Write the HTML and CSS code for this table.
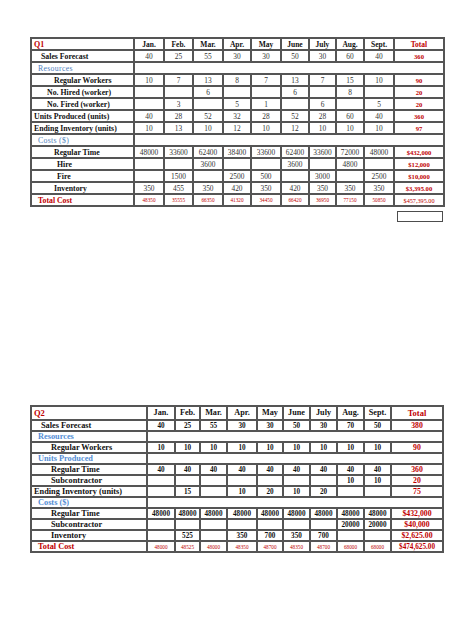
FILE: index.html
```html
<!DOCTYPE html>
<html>
<head>
<meta charset="utf-8">
<link rel="stylesheet" href="styles.css">
</head>
<body>
<div class="page">
  <table class="sheet sheet-q1">
    <colgroup>
      <col class="c-label1"><col style="width:30px"><col style="width:29px"><col style="width:30px"><col style="width:28px"><col style="width:30px"><col style="width:28px"><col style="width:27px"><col style="width:28px"><col style="width:30px"><col class="c-total1">
    </colgroup>
    <tr class="head">
      <td class="lbl q">Q1</td><td>Jan.</td><td>Feb.</td><td>Mar.</td><td>Apr.</td><td>May</td><td>June</td><td>July</td><td>Aug.</td><td>Sept.</td><td class="tot">Total</td>
    </tr>
    <tr><td class="lbl i1">Sales Forecast</td><td>40</td><td>25</td><td>55</td><td>30</td><td>30</td><td>50</td><td>30</td><td>60</td><td>40</td><td class="tot">360</td></tr>
    <tr><td class="lbl sec">Resources</td><td colspan="10"></td></tr>
    <tr><td class="lbl i3">Regular Workers</td><td>10</td><td>7</td><td>13</td><td>8</td><td>7</td><td>13</td><td>7</td><td>15</td><td>10</td><td class="tot">90</td></tr>
    <tr><td class="lbl i2">No. Hired (worker)</td><td></td><td></td><td>6</td><td></td><td></td><td>6</td><td></td><td>8</td><td></td><td class="tot">20</td></tr>
    <tr><td class="lbl i2">No. Fired (worker)</td><td></td><td>3</td><td></td><td>5</td><td>1</td><td></td><td>6</td><td></td><td>5</td><td class="tot">20</td></tr>
    <tr><td class="lbl">Units Produced (units)</td><td>40</td><td>28</td><td>52</td><td>32</td><td>28</td><td>52</td><td>28</td><td>60</td><td>40</td><td class="tot">360</td></tr>
    <tr><td class="lbl">Ending Inventory (units)</td><td>10</td><td>13</td><td>10</td><td>12</td><td>10</td><td>12</td><td>10</td><td>10</td><td>10</td><td class="tot">97</td></tr>
    <tr><td class="lbl sec">Costs ($)</td><td colspan="10"></td></tr>
    <tr><td class="lbl i3">Regular Time</td><td>48000</td><td>33600</td><td>62400</td><td>38400</td><td>33600</td><td>62400</td><td>33600</td><td>72000</td><td>48000</td><td class="tot">$432,000</td></tr>
    <tr><td class="lbl i4">Hire</td><td></td><td></td><td>3600</td><td></td><td></td><td>3600</td><td></td><td>4800</td><td></td><td class="tot">$12,000</td></tr>
    <tr><td class="lbl i4">Fire</td><td></td><td>1500</td><td></td><td>2500</td><td>500</td><td></td><td>3000</td><td></td><td>2500</td><td class="tot">$10,000</td></tr>
    <tr><td class="lbl i3">Inventory</td><td>350</td><td>455</td><td>350</td><td>420</td><td>350</td><td>420</td><td>350</td><td>350</td><td>350</td><td class="tot">$3,395.00</td></tr>
    <tr class="sum"><td class="lbl red">Total Cost</td><td>48350</td><td>35555</td><td>66350</td><td>41320</td><td>34450</td><td>66420</td><td>36950</td><td>77150</td><td>50850</td><td class="tot">$457,395.00</td></tr>
  </table>

  <div class="spare-box"></div>

  <table class="sheet sheet-q2">
    <colgroup>
      <col class="c-label2"><col style="width:28px"><col style="width:25px"><col style="width:27px"><col style="width:30px"><col style="width:26px"><col style="width:27px"><col style="width:27px"><col style="width:27px"><col style="width:27px"><col class="c-total2">
    </colgroup>
    <tr class="head">
      <td class="lbl q">Q2</td><td>Jan.</td><td>Feb.</td><td>Mar.</td><td>Apr.</td><td>May</td><td>June</td><td>July</td><td>Aug.</td><td>Sept.</td><td class="tot">Total</td>
    </tr>
    <tr><td class="lbl i1">Sales Forecast</td><td>40</td><td>25</td><td>55</td><td>30</td><td>30</td><td>50</td><td>30</td><td>70</td><td>50</td><td class="tot">380</td></tr>
    <tr><td class="lbl sec">Resources</td><td colspan="10"></td></tr>
    <tr><td class="lbl i3">Regular Workers</td><td>10</td><td>10</td><td>10</td><td>10</td><td>10</td><td>10</td><td>10</td><td>10</td><td>10</td><td class="tot">90</td></tr>
    <tr><td class="lbl sec">Units Produced</td><td colspan="10"></td></tr>
    <tr><td class="lbl i3">Regular Time</td><td>40</td><td>40</td><td>40</td><td>40</td><td>40</td><td>40</td><td>40</td><td>40</td><td>40</td><td class="tot">360</td></tr>
    <tr><td class="lbl i3">Subcontractor</td><td></td><td></td><td></td><td></td><td></td><td></td><td></td><td>10</td><td>10</td><td class="tot">20</td></tr>
    <tr><td class="lbl">Ending Inventory (units)</td><td></td><td>15</td><td></td><td>10</td><td>20</td><td>10</td><td>20</td><td></td><td></td><td class="tot">75</td></tr>
    <tr><td class="lbl sec">Costs ($)</td><td colspan="10"></td></tr>
    <tr><td class="lbl i3">Regular Time</td><td>48000</td><td>48000</td><td>48000</td><td>48000</td><td>48000</td><td>48000</td><td>48000</td><td>48000</td><td>48000</td><td class="tot">$432,000</td></tr>
    <tr><td class="lbl i3">Subcontractor</td><td></td><td></td><td></td><td></td><td></td><td></td><td></td><td>20000</td><td>20000</td><td class="tot">$40,000</td></tr>
    <tr><td class="lbl i3">Inventory</td><td></td><td>525</td><td></td><td>350</td><td>700</td><td>350</td><td>700</td><td></td><td></td><td class="tot">$2,625.00</td></tr>
    <tr class="sum"><td class="lbl red">Total Cost</td><td>48000</td><td>48525</td><td>48000</td><td>48350</td><td>48700</td><td>48350</td><td>48700</td><td>68000</td><td>68000</td><td class="tot">$474,625.00</td></tr>
  </table>
</div>
</body>
</html>
```

FILE: styles.css
```css
html, body {
  margin: 0;
  padding: 0;
  background: #ffffff;
}

.page {
  padding: 37px 0 0 30px;
  width: 413px;
  font-family: "Liberation Serif", "DejaVu Serif", serif;
  color: #111;
}

.sheet {
  border-collapse: collapse;
  table-layout: fixed;
}

.sheet td {
  border: 2px solid #555555;
  padding: 0;
  text-align: center;
  vertical-align: middle;
  white-space: nowrap;
  overflow: hidden;
}

.c-label1 { width: 103px; }
.c-total1 { width: 50px; }
.c-label2 { width: 116px; }
.c-total2 { width: 52px; }

/* ---------- Q1 table ---------- */
.sheet-q1 {
  width: 413px;
}
.sheet-q1 tr { height: 12px; }
.sheet-q1 tr.head { height: 12px; }
.sheet-q1 td {
  font-size: 7.4px;
  line-height: 9px;
  color: #333;
}
.sheet-q1 tr.head td {
  font-size: 7.5px;
  font-weight: bold;
  color: #111;
}
.sheet-q1 tr.head td.q {
  font-size: 8px;
  color: #c00000;
}
.sheet-q1 td.lbl {
  font-size: 7.8px;
  font-weight: bold;
  color: #111;
}
.sheet-q1 td.tot {
  font-size: 6.6px;
  font-weight: bold;
  color: #c00000;
}
.sheet-q1 tr.head td.tot {
  font-size: 7.5px;
  color: #c00000;
}
.sheet-q1 tr.sum td {
  font-size: 5.2px;
  color: #c00000;
}
.sheet-q1 tr.sum td.lbl {
  font-size: 7.8px;
  color: #c00000;
}
.sheet-q1 tr.sum td.tot {
  font-size: 6.2px;
  font-weight: normal;
}

/* ---------- Q2 table ---------- */
.sheet-q2 {
  width: 412px;
  margin-top: 183px;
}
.sheet-q2 tr { height: 11px; }
.sheet-q2 tr.head { height: 14px; }
.sheet-q2 td {
  font-size: 7.2px;
  line-height: 8px;
  font-weight: bold;
}
.sheet-q2 tr.head td {
  font-size: 8.2px;
}
.sheet-q2 tr.head td.q {
  font-size: 8.5px;
  color: #c00000;
}
.sheet-q2 td.lbl {
  font-size: 8.3px;
  font-weight: bold;
}
.sheet-q2 td.tot {
  font-size: 7.8px;
  color: #c00000;
}
.sheet-q2 tr.head td.tot {
  font-size: 8.5px;
}
.sheet-q2 tr.sum td {
  font-size: 5.2px;
  font-weight: normal;
  color: #c00000;
}
.sheet-q2 tr.sum td.lbl {
  font-size: 8.3px;
  font-weight: bold;
}
.sheet-q2 tr.sum td.tot {
  font-size: 7.2px;
  font-weight: bold;
}

/* ---------- label styles ---------- */
.sheet td.lbl {
  text-align: left;
  padding-left: 2px;
}
.sheet td.q {
  color: #c00000;
  font-weight: bold;
  padding-left: 2px;
}
.sheet td.lbl.i1 { padding-left: 9px; }
.sheet td.lbl.i2 { padding-left: 15px; }
.sheet td.lbl.i3 { padding-left: 22px; }
.sheet td.lbl.i4 { padding-left: 25px; }
.sheet-q2 td.lbl.i3 { padding-left: 19px; }

.sheet td.lbl.sec {
  color: #4f81bd;
  font-weight: normal;
  padding-left: 6px;
  letter-spacing: 0.3px;
}
.sheet-q2 td.lbl.sec {
  color: #558ed5;
  font-weight: bold;
  letter-spacing: 0;
}
.sheet td.lbl.red {
  color: #c00000;
  padding-left: 6px;
}

.spare-box {
  width: 44px;
  height: 9px;
  margin: 4px 0 0 auto;
  border: 1px solid #4d4d4d;
}
```
